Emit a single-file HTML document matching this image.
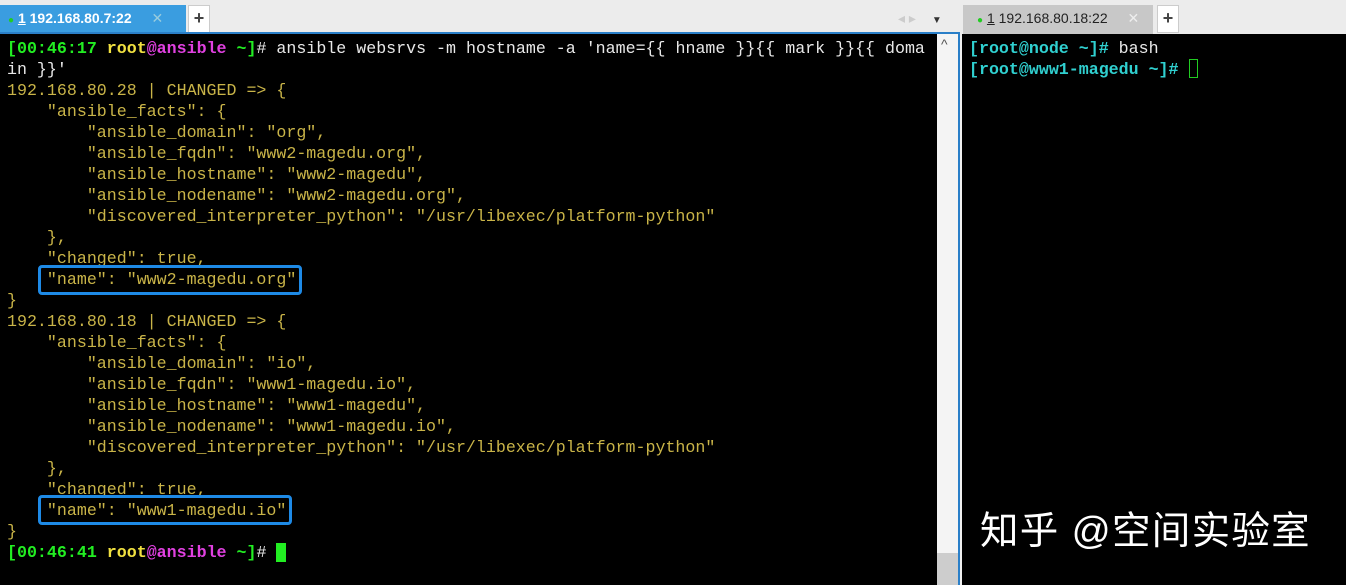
<!DOCTYPE html>
<html><head><meta charset="utf-8"><style>
body{margin:0;width:1346px;height:585px;overflow:hidden;background:#f0f0f0;position:relative;font-family:"Liberation Mono",monospace}
.abs{position:absolute}
.term{font-size:16.64px;line-height:21px;white-space:pre;color:#c9b448}
.t{font-family:"Liberation Sans",sans-serif;font-size:14px}
.g{color:#22ee22;font-weight:bold}.y{color:#f0e040;font-weight:bold}.m{color:#e040e0;font-weight:bold}.w{color:#e8e8e8}.c{color:#30d0d0;font-weight:bold}
.box{position:absolute;border:3px solid #1e8ae6;border-radius:4px}
</style></head><body>
<div class="abs" style="left:0;top:0;width:1346px;height:36px;background:#ececec"></div>
<div class="abs" style="left:0;top:5px;width:186px;height:29px;background:#3a9de0"></div>
<div class="abs t" style="left:8px;top:10px;color:#fff;font-weight:bold"><span style="color:#2c2;font-size:10px">●</span> <u>1</u> 192.168.80.7:22 <span style="font-weight:normal;color:#9cd;margin-left:16px">✕</span></div>
<div class="abs" style="left:188px;top:5px;width:20px;height:26px;background:#fff;border:1px solid #ccc;text-align:center;font:bold 18px 'Liberation Sans';line-height:24px;color:#444">+</div>
<div class="abs t" style="left:898px;top:10px;color:#ccc">◂ ▸ <span style="color:#333;margin-left:12px;font-size:10px">▼</span></div>
<div class="abs" style="left:963px;top:5px;width:190px;height:29px;background:#c8c8c8"></div>
<div class="abs t" style="left:977px;top:10px;color:#222"><span style="color:#2c2;font-size:10px">●</span> <u>1</u> 192.168.80.18:22 <span style="color:#eee;margin-left:16px">✕</span></div>
<div class="abs" style="left:1157px;top:5px;width:20px;height:26px;background:#fff;border:1px solid #ccc;text-align:center;font:bold 18px 'Liberation Sans';line-height:24px;color:#444">+</div>
<div class="abs" style="left:0;top:32px;width:960px;height:553px;background:#2a7fc8"></div>
<div class="abs" style="left:0;top:34px;width:937px;height:551px;background:#000"></div>
<div class="abs" style="left:937px;top:34px;width:21px;height:551px;background:#f4f4f4"></div>
<div class="abs" style="left:937px;top:553px;width:21px;height:32px;background:#cdcdcd"></div>
<div class="abs" style="left:941px;top:36px;color:#555;font:14px 'Liberation Sans'">^</div>
<div class="abs" style="left:962px;top:34px;width:384px;height:551px;background:#000"></div>
<div class="abs term" style="left:7px;top:38px"><span class="g">[00:46:17 </span><span class="y">root</span><span class="m">@ansible</span><span class="g"> ~]</span><span class="w"># ansible websrvs -m hostname -a 'name={{ hname }}{{ mark }}{{ doma
in }}'</span>
192.168.80.28 | CHANGED =&gt; {
    "ansible_facts": {
        "ansible_domain": "org",
        "ansible_fqdn": "www2-magedu.org",
        "ansible_hostname": "www2-magedu",
        "ansible_nodename": "www2-magedu.org",
        "discovered_interpreter_python": "/usr/libexec/platform-python"
    },
    "changed": true,
    "name": "www2-magedu.org"
}
192.168.80.18 | CHANGED =&gt; {
    "ansible_facts": {
        "ansible_domain": "io",
        "ansible_fqdn": "www1-magedu.io",
        "ansible_hostname": "www1-magedu",
        "ansible_nodename": "www1-magedu.io",
        "discovered_interpreter_python": "/usr/libexec/platform-python"
    },
    "changed": true,
    "name": "www1-magedu.io"
}
<span class="g">[00:46:41 </span><span class="y">root</span><span class="m">@ansible</span><span class="g"> ~]</span><span class="w"># </span><span style="background:#22ee22"> </span></div>
<div class="box" style="left:38px;top:265px;width:258px;height:24px"></div>
<div class="box" style="left:38px;top:495px;width:248px;height:24px"></div>
<div class="abs term" style="left:969px;top:38px"><span class="c">[root@node ~]#</span><span class="w"> bash</span>
<span class="c">[root@www1-magedu ~]#</span> <span style="outline:1px solid #2c2;outline-offset:-1px;display:inline-block;width:9px;height:19px;vertical-align:-4px"></span></div>
<div class="abs" style="left:980px;top:500px;color:#fff;font:38.5px 'Liberation Sans','Noto Sans CJK SC',sans-serif;letter-spacing:1.3px">知乎 @空间实验室</div>
</body></html>
